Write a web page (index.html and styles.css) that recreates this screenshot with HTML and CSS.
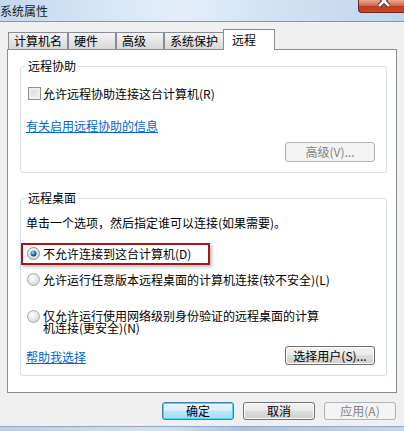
FILE: index.html
```html
<!DOCTYPE html>
<html lang="zh-CN">
  <head>
    <meta charset="UTF-8" />
    <meta name="viewport" content="width=device-width, initial-scale=1.0" />
    <title>系统属性</title>
    <link rel="stylesheet" href="styles.css">
  </head>
  <body>
    <!-- 标题栏 -->
    <div class="titlebar">
      <span class="title">系统属性</span>
      <div class="close">
        <svg width="16" height="8" viewBox="0 0 16 8">
          <path d="M3 -4 L13 6 M13 -4 L3 6" stroke="#3a1a14" stroke-width="4.5" fill="none"/>
          <path d="M3 -4 L13 6 M13 -4 L3 6" stroke="#fff" stroke-width="2.6" fill="none"/>
        </svg>
      </div>
    </div>

    <div class="dialog">
      <ul class="tabs">
        <li>计算机名</li>
        <li>硬件</li>
        <li>高级</li>
        <li>系统保护</li>
        <li class="on">远程</li>
      </ul>

      <div class="panel">
        <!-- 远程协助 -->
        <fieldset class="group assist">
          <legend>远程协助</legend>
          <label class="check">
            <span class="box"></span>允许远程协助连接这台计算机(R)
          </label>
          <a class="link" href="">有关启用远程协助的信息</a>
          <div class="btnrow">
            <button class="btn" disabled>高级(V)...</button>
          </div>
        </fieldset>

        <!-- 远程桌面 -->
        <fieldset class="group desktop">
          <legend>远程桌面</legend>
          <p class="hint">单击一个选项，然后指定谁可以连接(如果需要)。</p>
          <div class="mark">
            <label class="radio">
              <svg class="dot" width="13" height="13" viewBox="0 0 13 13">
                <defs>
                  <radialGradient id="rin" cx="0.4" cy="0.35" r="0.7">
                    <stop offset="0" stop-color="#ffffff"/>
                    <stop offset="1" stop-color="#d2d4d6"/>
                  </radialGradient>
                  <radialGradient id="rsel" cx="0.4" cy="0.35" r="0.7">
                    <stop offset="0" stop-color="#aee0f8"/>
                    <stop offset="0.5" stop-color="#2a7fbf"/>
                    <stop offset="1" stop-color="#0d3f73"/>
                  </radialGradient>
                </defs>
                <circle cx="6.5" cy="6.5" r="6" fill="url(#rin)" stroke="#8e8f8f"/>
                <circle cx="6.5" cy="6.5" r="3" fill="url(#rsel)"/>
              </svg>
              不允许连接到这台计算机(D)
            </label>
          </div>
          <label class="radio second">
            <svg class="dot" width="13" height="13" viewBox="0 0 13 13">
              <circle cx="6.5" cy="6.5" r="6" fill="url(#rin)" stroke="#a9abad"/>
            </svg>
            允许运行任意版本远程桌面的计算机连接(较不安全)(L)
          </label>
          <label class="radio third">
            <svg class="dot" width="13" height="13" viewBox="0 0 13 13">
              <circle cx="6.5" cy="6.5" r="6" fill="url(#rin)" stroke="#a9abad"/>
            </svg>
            <span class="wrap">仅允许运行使用网络级别身份验证的远程桌面的计算机连接(更安全)(N)</span>
          </label>
          <div class="btnrow split">
            <a class="link" href="">帮助我选择</a>
            <button class="btn">选择用户(S)...</button>
          </div>
        </fieldset>
      </div>

      <div class="footer">
        <button class="btn default">确定</button>
        <button class="btn">取消</button>
        <button class="btn" disabled>应用(A)</button>
      </div>
    </div>
    <div class="edge"></div>
  </body>
</html>
```

FILE: styles.css
```css
* {
  margin: 0;
  padding: 0;
  box-sizing: border-box;
}
body {
  width: 404px;
  height: 431px;
  overflow: hidden;
  background: #f0f0f0;
  font-family: "Noto Sans CJK SC", "Liberation Sans", sans-serif;
  font-size: 12px;
  line-height: 14px;
  color: #000;
}
ul,
li {
  list-style: none;
}

/* 标题栏 */
.titlebar {
  display: flex;
  height: 22px;
  background: linear-gradient(to right, #c3d7ee 0%, #d6e5f5 25%, #e4eef9 45%, #d3e3f4 65%, #c0d5ed 100%);
  border-bottom: 1px solid #7f97b1;
}
.title {
  padding: 4px 0 0 0;
  line-height: 14px;
  color: #1b1b1b;
}
.close {
  margin-left: auto;
  width: 46px;
  height: 13px;
  display: flex;
  justify-content: center;
  background: linear-gradient(#e9a995 0%, #d6684e 45%, #c2381f 55%, #c84b2c 100%);
  border: 1px solid #6e2417;
  border-top: none;
  border-right: none;
  border-radius: 0 0 0 4px;
}
.close svg {
  margin-left: 4px;
}

/* 탭 */
.dialog {
  padding-top: 7px;
}
.tabs {
  display: flex;
  align-items: flex-end;
  height: 21px;
  margin-left: 8px;
}
.tabs li {
  position: relative;
  height: 17px;
  min-width: 48px;
  margin-bottom: 1px;
  padding: 0 5px;
  line-height: 16px;
  border: 1px solid #898c95;
  border-bottom: none;
  background: linear-gradient(#f3f3f3, #e5e5e5 50%, #d9d9d9);
}
.tabs li.on {
  z-index: 1;
  height: 21px;
  min-width: 52px;
  margin: 0 -2px 0 -1px;
  padding: 0 8px;
  line-height: 19px;
  background: #fff;
}

.panel {
  width: 390px;
  margin: -1px 0 0 7px;
  padding: 9px 9px 16px 12px;
  background: #fff;
  border: 1px solid #898c95;
}

/* 그룹박스 */
.group {
  border: 1px solid #d5dfe5;
  border-radius: 3px;
  padding: 0 11px 10px 5px;
}
.group legend {
  padding: 0 2px;
  line-height: 14px;
}
.desktop {
  margin-top: 18px;
}

.check,
.radio {
  display: flex;
  align-items: flex-start;
  line-height: 14px;
}
.check {
  margin-top: 14px;
}
.box {
  width: 13px;
  height: 13px;
  margin: 0 2px 0 2px;
  border: 1px solid #8e8f8f;
  background: linear-gradient(135deg, #d6d6d6, #f4f4f4);
  box-shadow: inset 0 0 0 2px #f0f0f0;
}
.link {
  display: block;
  margin-top: 18px;
  color: #0066cc;
  text-decoration: underline;
}
.btnrow {
  display: flex;
  justify-content: flex-end;
  margin-top: 9px;
}
.btn {
  width: 90px;
  height: 20px;
  font-family: inherit;
  font-size: 12px;
  line-height: 16px;
  color: #000;
  border: 1px solid #707070;
  border-radius: 3px;
  background: linear-gradient(#f2f2f2 0%, #ebebeb 45%, #dddddd 50%, #cfcfcf 100%);
  box-shadow: inset 0 0 0 1px #fcfcfc;
}
.btn:disabled {
  color: #838383;
  border-color: #adb2b5;
  background: #f4f4f4;
  box-shadow: none;
}

.hint {
  margin-top: 11px;
}
.dot {
  flex: none;
  margin: 0 3px 0 1px;
}
/* 빨간 표시 박스 */
.mark {
  display: inline-block;
  width: 189px;
  margin: 13px 0 0 -5px;
  padding: 2px 4px;
  border: 2px solid #a4161a;
  box-shadow: 2px 2px 3px rgba(0, 0, 0, 0.25);
}
.mark .dot {
  margin-left: 0;
}
.second {
  margin-top: 8px;
}
.third {
  margin-top: 23px;
  line-height: 12px;
}
.wrap {
  width: 280px;
}
.split {
  justify-content: space-between;
  align-items: flex-end;
  margin-top: 12px;
}
.split .link {
  margin: 0 0 1px 0;
}
.split .btn {
  height: 19px;
}

/* 하단 버튼 */
.footer {
  display: flex;
  justify-content: flex-end;
  gap: 9px;
  margin-top: 9px;
  padding-right: 8px;
}
.footer .btn {
  width: 72px;
  height: 18px;
  line-height: 14px;
}
.footer .default {
  border-color: #3c7fb1;
  background: linear-gradient(#eaf6fd 0%, #d9f0fc 45%, #bee6fd 50%, #a7d9f5 100%);
  box-shadow: inset 0 0 0 1px #48d8fb;
}
.edge {
  height: 5px;
  margin-top: 6px;
  background: linear-gradient(to right, #b8cfe8, #d2e2f3 40%, #a9c4e2 60%, #c3d7ee);
  border-top: 1px solid #8ea8c6;
}
```
